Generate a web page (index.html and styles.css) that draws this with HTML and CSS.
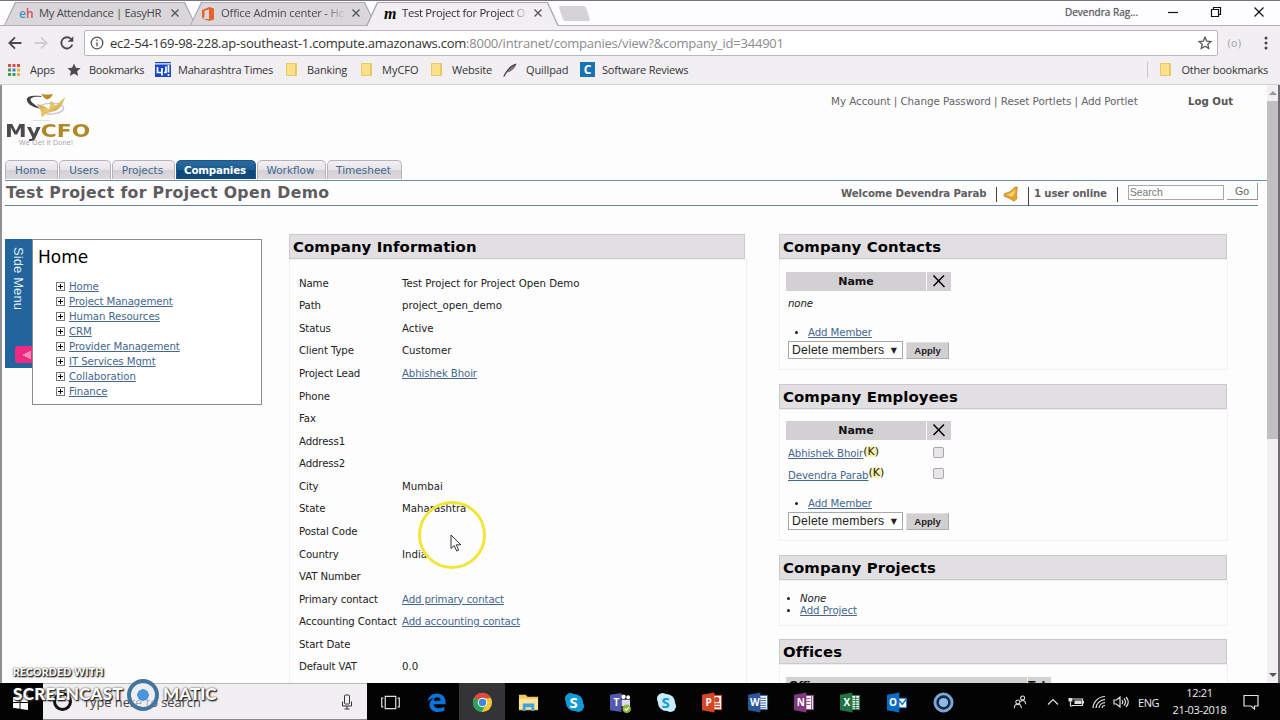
FILE: index.html
```html
<!DOCTYPE html>
<html lang="en">

<head>
  <meta charset="UTF-8" />
  <meta name="viewport" content="width=device-width, initial-scale=1.0" />
  <title>Test Project for Project Open Demo</title>
  <link rel="stylesheet" href="styles.css">
</head>

<body>
  <div class="window">
    <!-- Browser tabs -->
    <div class="tabstrip">
      <div class="tab tab-one">
        <span class="fav-eh"><b>e</b><i>h</i></span>
        <span class="tab-title t1">My Attendance | EasyHR</span>
        <svg class="close" viewBox="0 0 10 10"><path d="M1.5 1.5l7 7M8.5 1.5l-7 7" /></svg>
      </div>
      <div class="tab tab-two">
        <svg class="fav" viewBox="0 0 14 16"><path fill="#e8622c" fill-rule="evenodd" d="M1 4L8.5 1 13 2.5v11L8.5 15 1 12.5l7 .8V3.600L3.500 4.700v6.500L1 12.200z" /></svg>
        <span class="tab-title t2">Office Admin center - Ho</span>
        <svg class="close" viewBox="0 0 10 10"><path d="M1.5 1.5l7 7M8.5 1.5l-7 7" /></svg>
      </div>
      <div class="tab tab-three active">
        <span class="fav-m">m</span>
        <span class="tab-title t3">Test Project for Project O</span>
        <svg class="close" viewBox="0 0 10 10"><path d="M1.5 1.5l7 7M8.5 1.5l-7 7" /></svg>
      </div>
      <div class="new-tab"></div>
      <div class="window-controls">
        <span class="profile">Devendra Rag...</span>
        <svg viewBox="0 0 12 12"><path d="M1 6.5h10" /></svg>
        <svg viewBox="0 0 12 12"><path d="M1.5 3.5h7v7h-7zM3.5 3.5v-2h7v7h-2" /></svg>
        <svg viewBox="0 0 12 12"><path d="M1.5 1.5l9 9M10.5 1.5l-9 9" /></svg>
      </div>
    </div>

    <!-- Address bar -->
    <div class="toolbar">
      <svg class="nav-icon" viewBox="0 0 16 16"><path d="M14.5 8H2.5M8 2.3L2.3 8 8 13.7" /></svg>
      <svg class="nav-icon off" viewBox="0 0 16 16"><path d="M1.5 8h12M8 2.3L13.7 8 8 13.7" /></svg>
      <svg class="nav-icon" viewBox="0 0 16 16"><path d="M13.3 9.5A5.6 5.6 0 1 1 12 4" /><path class="solid" d="M14.3 1.2v5.6H8.700z" /></svg>
      <div class="address">
        <svg class="info" viewBox="0 0 14 14"><circle cx="7" cy="7" r="5.8" /><path d="M7 6.3v4M7 3.6v1.3" /></svg>
        <span class="url">ec2-54-169-98-228.ap-southeast-1.compute.amazonaws.com<em>:8000/intranet/companies/view?&amp;company_id=344901</em></span>
        <svg class="star" viewBox="0 0 14 14"><path d="M7 1.2l1.7 3.9 4.3.4-3.2 2.8.9 4.2L7 10.3l-3.7 2.2.9-4.2L1 5.5l4.300-.4z" /></svg>
      </div>
      <span class="extension">(o)</span>
      <svg class="kebab" viewBox="0 0 4 14"><circle cx="2" cy="2" r="1.5" /><circle cx="2" cy="7" r="1.5" /><circle cx="2" cy="12" r="1.5" /></svg>
    </div>

    <!-- Bookmarks -->
    <div class="bookmarks">
      <a class="bm bm-apps"><svg viewBox="0 0 14 14"><path fill="#d84f43" d="M1 1h3v3H1zM5.5 1h3v3h-3zM10 1h3v3h-3z" /><path fill="#3f7fd9" d="M5.5 5.5h3v3h-3z" /><path fill="#3d9b57" d="M1 5.5h3v3H1zM1 10h3v3H1zM5.5 10h3v3h-3z" /><path fill="#e8b23a" d="M10 5.5h3v3h-3zM10 10h3v3h-3z" /></svg><span>Apps</span></a>
      <a class="bm bm-star"><svg viewBox="0 0 14 14"><path fill="#4c4a4d" d="M7 .6l1.9 4.2 4.7.5-3.5 3 1 4.7L7 10.600 2.900 13l1-4.700-3.500-3 4.700-.5z" /></svg><span>Bookmarks</span></a>
      <a class="bm bm-mt"><svg viewBox="0 0 16 16"><path fill="#1748c8" d="M0 0h16v1.200H0zM0 2.500h16V15H0z" /><path fill="none" stroke="#fff" stroke-width="1.700" d="M2.500 5v5.500h3.500M7 6v7.500M11 4.500v6H9M13.500 3v7.500M13.500 12v2" /></svg><span>Maharashtra Times</span></a>
      <a class="bm bm-banking"><i class="folder"></i><span>Banking</span></a>
      <a class="bm bm-mycfo"><i class="folder"></i><span>MyCFO</span></a>
      <a class="bm bm-website"><i class="folder"></i><span>Website</span></a>
      <a class="bm bm-quill"><svg viewBox="0 0 14 14"><path fill="#77757a" d="M.5 13.500L4 7.500C6.500 3 10 1.200 13.500.8 12.500 4 9.500 8.500 4 9.700L1.300 13.700z" /><path stroke="#333" fill="none" d="M.8 13.500C3 8 7 3.500 13 1" /></svg><span>Quillpad</span></a>
      <a class="bm bm-soft"><i class="c-logo">C</i><span>Software Reviews</span></a>
      <a class="bm bm-other"><i class="folder"></i><span>Other bookmarks</span></a>
    </div>

    <!-- Web page -->
    <div class="viewport">
      <div class="page">
        <div class="page-header">
          <div class="logo">
            <svg viewBox="0 0 46 30">
              <defs>
                <linearGradient id="gold" x1="0" y1="0" x2="1" y2="1">
                  <stop offset="0" stop-color="#b88a28" />
                  <stop offset=".5" stop-color="#e8c96c" />
                  <stop offset="1" stop-color="#a97c1e" />
                </linearGradient>
              </defs>
              <path d="M12 14C30 7 41 12 39 17c-2 3.500-9 5-17 5" fill="none" stroke="#c9c7cb" stroke-width="1.400" />
              <path d="M16 3.200C5 2 0 4 1.200 8c.8 3 5 6.600 14 8.300C7 11 3 7.500 6 5.300c2-1.400 6-1.500 10-1.100z" fill="#444247" />
              <path d="M16 1c4 1 7 .8 12 0-1 3-3 5-6 5.800C19 5.500 17 3 16 1z" fill="#b98d2e" />
              <path d="M11 11l9 3 4 3 2-9 5 5 10-9c-3 9-7 14-12 15-6 1-9 3-12 6-2-4 0-9-6-14z" fill="url(#gold)" />
              <path d="M7 28.500h18" stroke="#ddd" />
            </svg>
            <div class="logo-name">My<span>CFO</span></div>
            <div class="logo-tag">We Get it Done!</div>
          </div>
          <div class="top-links">My Account | Change Password | Reset Portlets | Add Portlet</div>
          <div class="logout">Log Out</div>
        </div>

        <div class="nav-tabs">
          <a class="n1">Home</a>
          <a class="n2">Users</a>
          <a class="n3">Projects</a>
          <a class="n4 selected">Companies</a>
          <a class="n5">Workflow</a>
          <a class="n6">Timesheet</a>
        </div>

        <div class="title-row">
          <h1>Test Project for Project Open Demo</h1>
          <span class="welcome">Welcome Devendra Parab</span>
          <i class="bar"></i>
          <svg class="bell" viewBox="0 0 16 16"><path fill="#e2a52f" stroke="#bd7e1f" stroke-width=".7" d="M14.500 1c-1 4-1 8-.5 11.500L11 15.300C8 13 5 11.500 1 10.200L1.500 7.500C7 6.500 9 4 12 1z" /><path fill="#f5d36f" d="M12.500 3C10 6 7 8 3.500 8.600l5 2.400c2-1.500 3.500-4 4-8z" /></svg>
          <i class="bar tall"></i>
          <span class="online">1 user online</span>
          <i class="bar"></i>
          <input type="text" class="search" placeholder="Search" />
          <button class="go">Go</button>
        </div>

        <div class="content">
          <div class="side">
            <div class="side-handle">
              <span>Side Menu</span>
              <div class="pink"><svg viewBox="0 0 8 10"><path d="M1 4v2M3 3v4M5 2v6M7 1v8" /></svg></div>
            </div>
            <div class="side-box">
              <h2>Home</h2>
              <ul>
                <li><i></i><a>Home</a></li>
                <li><i></i><a>Project Management</a></li>
                <li><i></i><a>Human Resources</a></li>
                <li><i></i><a>CRM</a></li>
                <li><i></i><a>Provider Management</a></li>
                <li><i></i><a>IT Services Mgmt</a></li>
                <li><i></i><a>Collaboration</a></li>
                <li><i></i><a>Finance</a></li>
              </ul>
            </div>
          </div>

          <div class="middle">
            <h3>Company Information</h3>
            <div class="panel info-panel">
              <dl>
                <dt>Name</dt><dd>Test Project for Project Open Demo</dd>
                <dt>Path</dt><dd>project_open_demo</dd>
                <dt>Status</dt><dd>Active</dd>
                <dt>Client Type</dt><dd>Customer</dd>
                <dt>Project Lead</dt><dd><a>Abhishek Bhoir</a></dd>
                <dt>Phone</dt><dd></dd>
                <dt>Fax</dt><dd></dd>
                <dt>Address1</dt><dd></dd>
                <dt>Address2</dt><dd></dd>
                <dt>City</dt><dd>Mumbai</dd>
                <dt>State</dt><dd>Maharashtra</dd>
                <dt>Postal Code</dt><dd></dd>
                <dt>Country</dt><dd>India</dd>
                <dt>VAT Number</dt><dd></dd>
                <dt>Primary contact</dt><dd><a>Add primary contact</a></dd>
                <dt>Accounting Contact</dt><dd><a>Add accounting contact</a></dd>
                <dt>Start Date</dt><dd></dd>
                <dt>Default VAT</dt><dd>0.0</dd>
              </dl>
            </div>
          </div>

          <div class="right">
            <h3>Company Contacts</h3>
            <div class="panel contacts">
              <div class="thead"><b>Name</b><b><svg viewBox="0 0 14 14"><path d="M1.5 1.5l11 11.5M12 1.5L1.5 12" /></svg></b></div>
              <div class="none">none</div>
              <ul class="actions"><li><a>Add Member</a></li></ul>
              <div class="apply-row"><span class="select">Delete members<i>▼</i></span><button>Apply</button></div>
            </div>

            <h3>Company Employees</h3>
            <div class="panel employees">
              <div class="thead"><b>Name</b><b><svg viewBox="0 0 14 14"><path d="M1.5 1.5l11 11.5M12 1.5L1.5 12" /></svg></b></div>
              <div class="member"><a>Abhishek Bhoir</a><span class="k">(K)</span><i class="check"></i></div>
              <div class="member"><a>Devendra Parab</a><span class="k">(K)</span><i class="check"></i></div>
              <ul class="actions"><li><a>Add Member</a></li></ul>
              <div class="apply-row"><span class="select">Delete members<i>▼</i></span><button>Apply</button></div>
            </div>

            <h3>Company Projects</h3>
            <div class="panel projects">
              <ul>
                <li><em>None</em></li>
                <li><a>Add Project</a></li>
              </ul>
            </div>

            <h3>Offices</h3>
            <div class="panel offices">
              <div class="thead"><b>Office</b><b>Tel</b></div>
            </div>
          </div>
        </div>
      </div>
      <div class="scrollbar">
        <i class="up"></i>
        <div class="thumb"></div>
        <i class="down"></i>
      </div>
    </div>

    <!-- Windows taskbar -->
    <div class="taskbar">
      <div class="start"><svg viewBox="0 0 16 16"><path fill="#fff" d="M0 2.300L7 1.300v6.200H0zM8 1.200L16 0v7.500H8zM0 8.500h7v6.200l-7-1zM8 8.500h8V16l-8-1.200z" /></svg></div>
      <div class="cortana">
        <i class="ring"></i>
        <span>Type here to search</span>
        <svg viewBox="0 0 12 16"><rect x="3.500" y="1" width="5" height="9" rx="1" /><path d="M1.500 7.500V12h9V7.500M6 12v3M3.500 15h5" /></svg>
      </div>
      <div class="apps">
        <div class="app"><svg viewBox="0 0 22 22"><path fill="none" stroke="#ddd" stroke-width="1.300" d="M5.500 4.500h11v13h-11zM3.500 6.500H1.800v9h1.700M18.500 6.500h1.700v9h-1.700" /></svg></div>
        <div class="app"><svg viewBox="0 0 22 22"><path fill="#0b73d9" d="M1.500 10C2.500 5 6 1.500 11.300 1.500c6 0 9.200 4 9.200 9.300v2H8c.2 3 2.700 4.200 5.500 4.200 2.200 0 4.300-.6 5.800-1.500v4c-1.800 1-4 1.500-6.700 1.500-5.500 0-8.900-3.200-8.900-7.500 0-3 1.600-5.500 4.500-7C5.500 6.800 3 8 1.500 10zM8.200 9.200h7c0-2.400-1-3.700-3.300-3.700-2.100 0-3.400 1.500-3.700 3.700z" /></svg></div>
        <div class="app current"><svg viewBox="0 0 22 22"><circle cx="11" cy="11" r="10" fill="#f3c735" /><path fill="#dd4b3e" d="M11 11L2.300 6A10 10 0 0 1 20 6.500h-9z" /><path fill="#2da35a" d="M2.300 6A10 10 0 0 0 10 21l4.500-7.500L11 11z" /><circle cx="11" cy="11" r="5" fill="#fff" /><circle cx="11" cy="11" r="3.900" fill="#4285dc" /></svg></div>
        <div class="app open"><svg viewBox="0 0 22 22"><path fill="#f0c764" d="M1 3h7l2 2h11v14H1z" /><path fill="#fbe39a" d="M1 7h20v11H1z" /><path fill="#3fa3dc" d="M5 12h12v8h-3v-4H8v4H5z" /></svg></div>
        <div class="app skype"><svg viewBox="0 0 22 22"><circle cx="7" cy="7" r="6" /><circle cx="15" cy="15" r="6" /><circle cx="11" cy="11" r="9" /></svg><b>S</b></div>
        <div class="app open teams"><svg viewBox="0 0 22 22"><circle cx="14" cy="5" r="2.500" fill="#fff" /><circle cx="19" cy="5.500" r="2" fill="#fff" /><path fill="#dcdcf0" d="M12 8h9v7h-9z" /><path fill="#5558af" d="M0 3l12-2v20L0 19z" /><circle cx="17.500" cy="17.500" r="4.500" fill="#8fb63a" /><path d="M15.300 17.500l1.600 1.700 2.800-3.200" fill="none" stroke="#fff" stroke-width="1.200" /></svg><b>T</b></div>
        <div class="app skype light"><svg viewBox="0 0 22 22"><circle cx="7" cy="7" r="6" /><circle cx="15" cy="15" r="6" /><circle cx="11" cy="11" r="9" /></svg><b>S</b></div>
        <div class="app office"><svg viewBox="0 0 22 22"><path fill="#fff" stroke="#d24726" d="M11 3.500h9.500v15H11z" /><path stroke="#d24726" stroke-width="1.500" d="M13 12.500h6M13 15.500h6" /><circle cx="15.500" cy="8" r="2.700" fill="#d24726" /><path fill="#d24726" d="M0 3l13-2.500v21L0 19z" /></svg><b>P</b></div>
        <div class="app office"><svg viewBox="0 0 22 22"><path fill="#fff" stroke="#2b579a" d="M11 3.500h9.500v15H11z" /><path stroke="#2b579a" d="M13 6.500h6M13 9h6M13 11.500h6M13 14h6M13 16.500h6" /><path fill="#2b579a" d="M0 3l13-2.500v21L0 19z" /></svg><b>W</b></div>
        <div class="app office"><svg viewBox="0 0 22 22"><path fill="#fff" stroke="#80397b" d="M11 3.500h9.500v15H11z" /><path stroke="#80397b" d="M13 7h4M13 10h4M13 13h4M18.500 4v14" /><path fill="#80397b" d="M0 3l13-2.500v21L0 19z" /></svg><b>N</b></div>
        <div class="app office"><svg viewBox="0 0 22 22"><path fill="#fff" stroke="#217346" d="M11 3.500h9.500v15H11z" /><path stroke="#217346" d="M12 6.500h8M12 9h8M12 11.500h8M12 14h8M12 16.500h8M16.500 4v14" /><path fill="#217346" d="M0 3l13-2.500v21L0 19z" /></svg><b>X</b></div>
        <div class="app office open"><svg viewBox="0 0 22 22"><path fill="#fff" stroke="#0c6cc4" d="M11 6.500h9.500v10H11z" /><path stroke="#0c6cc4" stroke-width="1.500" fill="none" d="M13 9l3 4 4.500-6" /><path fill="#0c6cc4" d="M0 3l13-2.500v21L0 19z" /></svg><b>O</b></div>
        <div class="app open"><svg viewBox="0 0 22 22"><circle cx="11" cy="11" r="9" fill="#1a2a40" stroke="#7ba7d8" stroke-width="3" /><circle cx="11" cy="11" r="4.800" fill="#8fb9e6" /></svg></div>
      </div>
      <div class="tray">
        <svg class="people" viewBox="0 0 16 16"><circle cx="5.500" cy="8" r="2.300" /><path d="M1.500 15c0-6 8-6 8 0" /><circle cx="11" cy="3.500" r="2.300" /><path d="M8.500 7.500c2-2.500 6-1 6 3" /></svg>
        <svg class="chev" viewBox="0 0 12 12"><path d="M1 8.500L6 3.500l5 5" /></svg>
        <svg class="battery" viewBox="0 0 16 12"><path d="M5 3h9.500v6.500H4" /><path class="solid" d="M6.500 4.500h7V8h-7zM15 5h1v2.500h-1zM.5 2h4v3.500h-4z" /><path d="M2.500 5.500V10h2" /></svg>
        <svg class="wifi" viewBox="0 0 14 14"><path d="M1 13A12 12 0 0 1 13 1.500M4 13a9 9 0 0 1 9-8.300M7 13a6 6 0 0 1 6-5.300M10 13a3 3 0 0 1 3-2.500" /></svg>
        <svg class="sound" viewBox="0 0 16 14"><path d="M1 5h2.500L7 2v10L3.500 9H1zM9 5q1.500 2 0 4M11 3.500q3 3.500 0 7M13 2q4.500 5 0 10" /></svg>
        <span class="lang">ENG</span>
        <div class="clock"><span>12:21</span><span>21-03-2018</span></div>
        <svg class="note" viewBox="0 0 16 16"><path d="M1 1.500h14v10.500h-3.500v3L8 12H1z" /></svg>
      </div>
    </div>

    <!-- Pointer and recorder watermark on top of everything -->
    <div class="pointer-ring"></div>
    <svg class="pointer" viewBox="0 0 12 18"><path d="M1 1v13.500l3.200-3 2.500 5.500 2-.9-2.400-5.300h4.500z" /></svg>
    <div class="watermark">
      <div class="wm-top">RECORDED WITH</div>
      <div class="wm-row"><span class="wm-a">SCREENCAST</span><i></i><span class="wm-b">MATIC</span></div>
    </div>
  </div>
</body>

</html>
```
FILE: styles.css
```css
* {
  box-sizing: border-box;
}

body {
  margin: 0;
  overflow: hidden;
  font-family: 'DejaVu Sans', sans-serif;
  color: #222;
}

ul, dl, dd, h1, h2, h3 {
  margin: 0;
  padding: 0;
}

.window {
  position: relative;
  display: flex;
  flex-direction: column;
  width: 1280px;
  height: 720px;
  overflow: hidden;
  background: #f2eff3;
  border-top: 1px solid #777578;
}

/* Browser chrome */
.tabstrip {
  display: flex;
  height: 25px;
  flex: none;
  background: #fdfcfe;
  border-bottom: 1px solid #b2b0b4;
  font-family: 'Open Sans', sans-serif;
  font-size: 11.3px;
  padding-left: 4px;
}

.tab {
  position: relative;
  display: flex;
  align-items: center;
  height: 25px;
  flex: none;
  z-index: 1;
}

.tab::before,
.tab::after {
  content: '';
  position: absolute;
  inset: 1px 0 1px 0;
  z-index: -1;
  background: #a9a7ab;
  clip-path: polygon(11px 0, calc(100% - 11px) 0, 100% 100%, 0 100%);
}

.tab::after {
  inset: 2px 1px 1px 1px;
  background: #d9d7da;
}

.tab-one {
  width: 192px;
  padding-left: 15px;
}

.tab-two {
  width: 186px;
  margin-left: -6px;
  padding-left: 11px;
}

.tab-three {
  width: 193px;
  margin-left: -10px;
  padding-left: 18px;
  z-index: 2;
}

.tab.active::before {
  inset: 1px 0 0 0;
}

.tab.active::after {
  inset: 2px 1px -1px 1px;
  background: #f2eff3;
}

.fav-eh {
  width: 20px;
  font-size: 12px;
}

.fav-eh b {
  color: #3f8fd0;
  font-weight: 600;
}

.fav-eh i {
  color: #dc4d5d;
  font-style: normal;
  font-weight: 600;
}

.fav {
  width: 14px;
  height: 16px;
  margin: 0 6px 0 0;
}

.fav-m {
  width: 18px;
  font-family: 'Liberation Serif', serif;
  font-style: italic;
  font-weight: bold;
  font-size: 16px;
  line-height: 16px;
  color: #000;
}

.tab-title {
  white-space: nowrap;
  overflow: hidden;
  color: #4a484c;
  margin-top: -3px;
}

.t1 {
  width: 131px;
  letter-spacing: -0.36px;
}

.t2 {
  width: 130px;
  letter-spacing: -0.22px;
  -webkit-mask-image: linear-gradient(90deg, #000 80%, transparent 96%);
}

.t3 {
  width: 131px;
  letter-spacing: -0.32px;
  color: #2e2c30;
  -webkit-mask-image: linear-gradient(90deg, #000 82%, transparent 96%);
}

.close {
  width: 10px;
  height: 10px;
  margin-top: -2px;
  fill: none;
  stroke: #555;
  stroke-width: 1.4;
}

.new-tab {
  width: 27px;
  height: 15px;
  margin: 5px 0 0 2px;
  background: #d5d3d6;
  border-radius: 2px;
  transform: skewX(18deg);
}

.window-controls {
  display: flex;
  align-items: center;
  margin-left: auto;
  padding-right: 15px;
}

.window-controls svg {
  width: 12px;
  height: 12px;
  margin-left: 31px;
  margin-top: -3px;
  fill: none;
  stroke: #111;
  stroke-width: 1.2;
}

.window-controls .profile {
  width: 71px;
  margin-top: -2px;
  font-size: 10px;
  white-space: nowrap;
  color: #5d5b5f;
  text-shadow: 0 0 1px #888;
}

.toolbar {
  display: flex;
  align-items: center;
  height: 34px;
  flex: none;
  padding: 0 12px 0 7px;
}

.nav-icon {
  width: 16px;
  height: 16px;
  margin-right: 10px;
  fill: none;
  stroke: #4b494d;
  stroke-width: 1.8;
}

.nav-icon.off {
  stroke: #cfccd0;
}

.nav-icon .solid {
  fill: #4b494d;
  stroke: none;
}

.address {
  display: flex;
  align-items: center;
  width: 1134px;
  height: 26px;
  margin-left: -1px;
  padding: 0 5px;
  background: #fff;
  border: 1px solid #b9b7bb;
  border-radius: 2px;
}

.info,
.star {
  width: 14px;
  height: 14px;
  flex: none;
  fill: none;
  stroke: #555;
  stroke-width: 1.3;
}

.url {
  flex: 1;
  margin-left: 6px;
  font-family: 'Open Sans', sans-serif;
  font-size: 13px;
  letter-spacing: -0.23px;
  white-space: nowrap;
  color: #333;
}

.url em {
  font-style: normal;
  color: #8c8a8e;
}

.extension {
  margin-left: 9px;
  width: 16px;
  font-size: 10.5px;
  color: #aaa8ac;
}

.kebab {
  width: 4px;
  height: 14px;
  margin-left: auto;
  fill: #444;
}

.bookmarks {
  display: flex;
  align-items: center;
  height: 25px;
  flex: none;
  border-bottom: 1px solid #d3d1d4;
  font-family: 'Open Sans', sans-serif;
  font-size: 11px;
  color: #333;
  padding: 0 0 5px 7px;
}

.bm {
  display: flex;
  align-items: center;
  height: 20px;
  white-space: nowrap;
}

.bm svg {
  width: 14px;
  height: 14px;
}

.bm-apps { width: 60px; }
.bm-apps span { margin-left: 9px; letter-spacing: -0.2px; }
.bm-star { width: 88px; }
.bm-star span { margin-left: 8px; letter-spacing: -0.3px; }
.bm-mt { width: 131px; }
.bm-mt svg { width: 16px; height: 16px; }
.bm-mt span { margin-left: 7px; letter-spacing: -0.25px; }
.bm-banking { width: 75px; }
.bm-mycfo { width: 70px; }
.bm-website { width: 72px; }
.bm-website span,
.bm-banking span { letter-spacing: -0.15px; }
.bm-quill { width: 77px; }
.bm-quill span { margin-left: 9px; letter-spacing: -0.1px; }
.bm-soft span { margin-left: 7px; letter-spacing: -0.2px; }

.bm-other {
  margin-left: auto;
  border-left: 1px solid #c8c6ca;
  padding: 0 12px 0 12px;
  height: 16px;
}

.bm-other span {
  letter-spacing: -0.25px;
}

.folder {
  width: 11px;
  height: 13px;
  background: #fbe08a;
  border: 1px solid #e8c765;
  border-right-width: 2px;
  border-radius: 1px;
}

.folder + span {
  margin-left: 10px;
}

.c-logo {
  width: 15px;
  height: 15px;
  background: #1a72b5;
  color: #fff;
  font-style: normal;
  font-weight: bold;
  font-size: 12px;
  line-height: 15px;
  text-align: center;
}

/* Page */
.viewport {
  display: flex;
  height: 598px;
  flex: none;
  background: #fefdfe;
  border-left: 2px solid #929094;
  border-right: 2px solid #6f6d71;
  overflow: hidden;
}

.page {
  display: flex;
  flex-direction: column;
  width: 1265px;
  height: 598px;
  flex: none;
  padding-left: 3px;
  font-size: 10.2px;
  overflow: hidden;
}

.page a {
  color: #44678d;
  text-decoration: underline;
}

.page-header {
  display: flex;
  height: 75px;
  flex: none;
}

.logo {
  width: 826px;
  padding-top: 8px;
}

.logo svg {
  display: block;
  width: 46px;
  height: 29px;
  margin-left: 20px;
}

.logo-name {
  width: 70px;
  height: 17px;
  font-size: 17px;
  line-height: 18px;
  font-weight: bold;
  color: #4b494c;
  transform: scaleX(1.28);
  transform-origin: left;
}

.logo-name span {
  color: #b08828;
}

.logo-tag {
  margin: 0 0 0 14px;
  font: 7px/8px 'Liberation Sans', sans-serif;
  color: #a5a3a7;
  letter-spacing: 0.3px;
}

.top-links {
  width: 357px;
  padding-top: 10px;
  font-size: 10.4px;
  letter-spacing: -0.08px;
  color: #656367;
  white-space: nowrap;
}

.logout {
  padding-top: 11px;
  font-size: 10.2px;
  font-weight: bold;
  color: #555;
}

.nav-tabs {
  display: flex;
  gap: 1px;
  height: 21px;
  flex: none;
  border-bottom: 1px solid #6d8cab;
}

.nav-tabs a {
  height: 19px;
  border: 1px solid #b5b3b8;
  border-bottom: none;
  border-radius: 5px 5px 0 0;
  background: linear-gradient(#f2f0f4 0%, #e6e4e8 50%, #d3d1d5 51%, #dcdade 100%);
  line-height: 19px;
  text-align: center;
  text-decoration: none;
  font-size: 10.5px;
  padding-right: 2px;
}

.nav-tabs .n1 { width: 53px; }
.nav-tabs .n2 { width: 52px; }
.nav-tabs .n3 { width: 63px; }
.nav-tabs .n4 { width: 80px; }
.nav-tabs .n5 { width: 69px; }
.nav-tabs .n6 { width: 75px; }

.nav-tabs .selected {
  background: linear-gradient(#2a6a9e 0%, #1b5c90 50%, #0c4779 51%, #104b7d 100%);
  border-color: #1a5688;
  color: #fff;
  font-weight: bold;
  font-size: 10.3px;
  letter-spacing: -0.2px;
}

.title-row {
  display: flex;
  align-items: flex-start;
  width: 1253px;
  height: 25px;
  padding-top: 1px;
  flex: none;
  border-bottom: 1px solid #6d8499;
  font-weight: bold;
  color: #5e5c60;
}

.title-row h1 {
  width: 836px;
  padding-left: 1px;
  font-size: 15.7px;
  line-height: 21px;
  letter-spacing: 0.35px;
  white-space: nowrap;
}

.welcome {
  width: 155px;
  padding-top: 6px;
  letter-spacing: -0.1px;
  white-space: nowrap;
}

.bar {
  width: 1px;
  height: 15px;
  margin-top: 5px;
  background: #444;
}

.bar.tall {
  height: 19px;
}

.bell {
  width: 16px;
  height: 16px;
  margin: 4px 9px 0 6px;
}

.online {
  width: 88px;
  padding: 6px 0 0 5px;
  letter-spacing: -0.15px;
  white-space: nowrap;
}

.search {
  width: 96px;
  height: 15px;
  margin: 3px 3px 0 10px;
  padding: 0 1px;
  border: 1px solid #a9a7aa;
  font: 10.3px 'Liberation Sans', sans-serif;
}

.go {
  width: 31px;
  height: 17px;
  margin-top: 1px;
  padding: 0;
  background: #fcfbfd;
  border: none;
  border-right: 1px solid #999;
  border-bottom: 1px solid #999;
  font: 10.5px 'Liberation Sans', sans-serif;
  color: #666;
}

.content {
  display: flex;
  padding-top: 28px;
}

.side {
  display: flex;
  width: 284px;
  padding-top: 5px;
}

.side-handle {
  display: flex;
  flex-direction: column;
  width: 27px;
  height: 129px;
  background: #21659c;
}

.side-handle span {
  writing-mode: vertical-rl;
  height: 107px;
  width: 27px;
  padding-top: 8px;
  font: 13px/27px 'Liberation Sans', sans-serif;
  letter-spacing: 0.1px;
  color: #e4edf5;
}

.pink {
  width: 17px;
  height: 17px;
  margin-left: 10px;
  background: #ee2a82;
  border-radius: 3px 0 0 3px;
}

.pink svg {
  display: block;
  width: 8px;
  height: 10px;
  margin: 4px 0 0 8px;
  stroke: #fff;
  stroke-width: 0.9;
}

.side-box {
  width: 230px;
  height: 166px;
  border: 1px solid #8d8b8f;
  background: #fff;
}

.side-box h2 {
  margin: 6px 0 0 5px;
  font-size: 17px;
  line-height: 22px;
  font-weight: normal;
  color: #000;
}

.side-box ul {
  margin: 10.5px 0 0 23px;
  list-style: none;
}

.side-box li {
  display: flex;
  align-items: center;
  height: 15.05px;
}

.side-box li a {
  letter-spacing: -0.08px;
}

.side-box li i {
  width: 9px;
  height: 9px;
  margin-right: 4px;
  border: 1px solid #777;
  background: linear-gradient(#000, #000) center / 5px 1px no-repeat, linear-gradient(#000, #000) center / 1px 5px no-repeat;
}

.middle {
  width: 490px;
}

h3 {
  width: 456px;
  height: 25px;
  padding-left: 3px;
  border: 1px solid #cbc9cc;
  background: #e1dfe2;
  font-size: 14.9px;
  line-height: 24px;
  letter-spacing: 0.1px;
  color: #000;
}

.panel {
  border: 1px solid #f1eff2;
}

.info-panel {
  width: 458px;
  height: 480px;
  padding: 12px 0 0 9px;
}

.info-panel dl {
  display: grid;
  grid-template-columns: 103px 1fr;
  grid-auto-rows: 22.57px;
  align-items: center;
  white-space: nowrap;
}

.info-panel dt,
.info-panel dd a {
  letter-spacing: -0.12px;
}

.right {
  width: 450px;
}

.right h3 {
  width: 448px;
}

.right .panel {
  width: 449px;
  padding-left: 6px;
}

.contacts {
  height: 111px;
  padding-top: 12px;
  margin-bottom: 14px;
}

.employees {
  height: 132px;
  padding-top: 11px;
  margin-bottom: 14px;
}

.projects {
  height: 46px;
  padding-top: 12px;
  margin-bottom: 13px;
}

.offices {
  height: 60px;
  padding-top: 12px;
}

.thead {
  display: flex;
  gap: 1px;
  height: 19px;
}

.thead b {
  width: 140px;
  background: #d2d0d3;
  text-align: center;
  line-height: 20px;
  font-size: 11px;
  color: #111;
}

.thead b:last-child {
  width: 24px;
}

.offices .thead b {
  width: 241px;
  text-align: left;
  padding-left: 3px;
  line-height: 17px;
}

.offices .thead b:last-child {
  width: 23px;
  padding: 0;
}

.thead svg {
  width: 14px;
  height: 14px;
  margin-top: 2px;
  fill: none;
  stroke: #000;
  stroke-width: 1.5;
}

.none {
  padding: 7px 0 0 2px;
  height: 33px;
  font-style: italic;
  letter-spacing: -0.15px;
}

.actions {
  padding-left: 22px;
  height: 16px;
  line-height: 17px;
  letter-spacing: -0.1px;
}

.apply-row {
  display: flex;
  gap: 3px;
  align-items: center;
  padding: 1px 0 0 2px;
}

.select {
  display: flex;
  align-items: center;
  justify-content: space-between;
  width: 115px;
  height: 18px;
  padding: 0 5px 0 3px;
  border: 1px solid #a9a7aa;
  background: #fff;
  font: 12.2px 'Liberation Sans', sans-serif;
  letter-spacing: 0.2px;
  color: #222;
  white-space: nowrap;
}

.select i {
  font: 8px 'DejaVu Sans', sans-serif;
}

.apply-row button {
  width: 43px;
  height: 17px;
  padding: 0;
  background: #d2cfd1;
  border: 1px solid;
  border-color: #e2e0e2 #aeacae #aeacae #e2e0e2;
  font: bold 9.5px 'Liberation Sans', sans-serif;
  color: #222;
}

.member {
  display: flex;
  align-items: center;
  height: 21.5px;
  width: 158px;
  padding: 3px 0 0 2px;
  white-space: nowrap;
}

.member a {
  padding-top: 3px;
  letter-spacing: -0.1px;
}

.k {
  margin-top: -2px;
  font-size: 11px;
  background: radial-gradient(#f5f2a4 45%, transparent 75%);
}

.check {
  width: 11px;
  height: 11px;
  margin-left: auto;
  border: 1px solid #aaa8ab;
  border-radius: 2px;
  background: #e8e6e9;
}

.employees .actions {
  margin-top: 12px;
}

.projects ul {
  padding-left: 14px;
  line-height: 12.3px;
  letter-spacing: -0.08px;
}

/* Scrollbar */
.scrollbar {
  display: flex;
  flex-direction: column;
  align-items: center;
  width: 11px;
  background: #f1eff2;
}

.scrollbar i {
  border: 4px solid transparent;
}

.scrollbar .up {
  margin: 6px 0 6px;
  border-bottom: 4px solid #9a989b;
  border-top: 0;
}

.scrollbar .thumb {
  width: 11px;
  height: 338px;
  background: #c1bfc2;
}

.scrollbar .down {
  margin: auto 0 6px;
  border-top: 4px solid #555;
  border-bottom: 0;
}

/* Taskbar */
.taskbar {
  display: flex;
  height: 38px;
  flex: none;
  background: #030304;
  font-family: 'Open Sans', sans-serif;
  color: #eee;
}

.start {
  display: flex;
  align-items: center;
  width: 43px;
  padding-left: 13px;
}

.start svg {
  width: 15px;
  height: 15px;
}

.cortana {
  display: flex;
  align-items: center;
  width: 324px;
  height: 37px;
  background: #f2eff3;
  border-top: 1px solid #b9b7ba;
  border-bottom: 1px solid #8b898c;
  padding: 0 14px 0 10px;
}

.cortana .ring {
  width: 19px;
  height: 19px;
  border: 3px solid #111;
  border-radius: 50%;
}

.cortana span {
  margin: 1px 0 0 11px;
  font-size: 12.8px;
  color: #444;
}

.cortana svg {
  width: 12px;
  height: 16px;
  margin-left: auto;
  fill: none;
  stroke: #333;
}

.apps {
  display: flex;
}

.app {
  position: relative;
  display: flex;
  align-items: center;
  justify-content: center;
  width: 46.1px;
  height: 38px;
}

.app svg {
  width: 21px;
  height: 21px;
}

.app.current {
  background: #343436;
}

.app.open {
  background: linear-gradient(#2f6b2b, #2f6b2b) bottom center / 37px 1px no-repeat;
}

.app b {
  position: absolute;
  font-size: 10px;
  line-height: 12px;
  color: #fff;
  left: 14px;
  top: 13px;
}

.office b,
.teams b {
  width: 10px;
  text-align: center;
}

.skype b {
  left: 18px;
  top: 11px;
  font-size: 15px;
  line-height: 16px;
}

.skype svg {
  fill: #139bd8;
}

.skype.light svg {
  fill: #c8ecfb;
}

.skype.light b {
  color: #139bd8;
}

.tray {
  display: flex;
  align-items: center;
  margin-left: auto;
  padding-right: 21px;
}

.tray svg {
  height: 14px;
  fill: none;
  stroke: #e2e0e3;
  stroke-width: 1.2;
}

.tray .solid {
  fill: #e2e0e3;
  stroke: none;
}

.people { width: 16px; margin-right: 19px; }
.chev { width: 12px; margin-right: 9px; }
.battery { width: 16px; margin-right: 8px; }
.wifi { width: 14px; margin-right: 7px; }
.sound { width: 16px; margin-right: 9px; }

.lang {
  width: 33px;
  font-size: 11px;
  letter-spacing: -0.4px;
}

.clock {
  display: flex;
  flex-direction: column;
  align-items: center;
  width: 57px;
  margin-top: -2px;
  font-size: 11px;
  line-height: 17px;
  letter-spacing: -0.35px;
  white-space: nowrap;
}

.tray .note {
  width: 16px;
  height: 16px;
  margin-left: 15px;
}

/* Overlays */
.pointer-ring {
  position: absolute;
  left: 418px;
  top: 500px;
  width: 68px;
  height: 68px;
  border: 3px solid #f1e638;
  border-radius: 50%;
}

.pointer {
  position: absolute;
  left: 450px;
  top: 533px;
  width: 12px;
  height: 18px;
  fill: #fff;
  stroke: #333;
}

.watermark {
  position: absolute;
  left: 13px;
  top: 664px;
  font-family: Lato, sans-serif;
  font-weight: 900;
  color: #fff;
  text-shadow: 1px 1px 1px #222, 0 0 2px #444, 1px 1px 2px #333;
}

.wm-top {
  font-size: 10.5px;
  line-height: 14px;
  letter-spacing: 0.2px;
}

.wm-row {
  display: flex;
  align-items: center;
  height: 32px;
  font-size: 17px;
}

.wm-row span {
  height: 24px;
  line-height: 22px;
}

.wm-a {
  width: 114px;
  letter-spacing: 0.3px;
}

.wm-row i {
  width: 32px;
  height: 32px;
  margin-right: 4px;
  border: 4px solid #43749f;
  border-radius: 50%;
  background: radial-gradient(#4a94d8 0 5.5px, rgba(232, 237, 243, 0.6) 6px);
}
```
